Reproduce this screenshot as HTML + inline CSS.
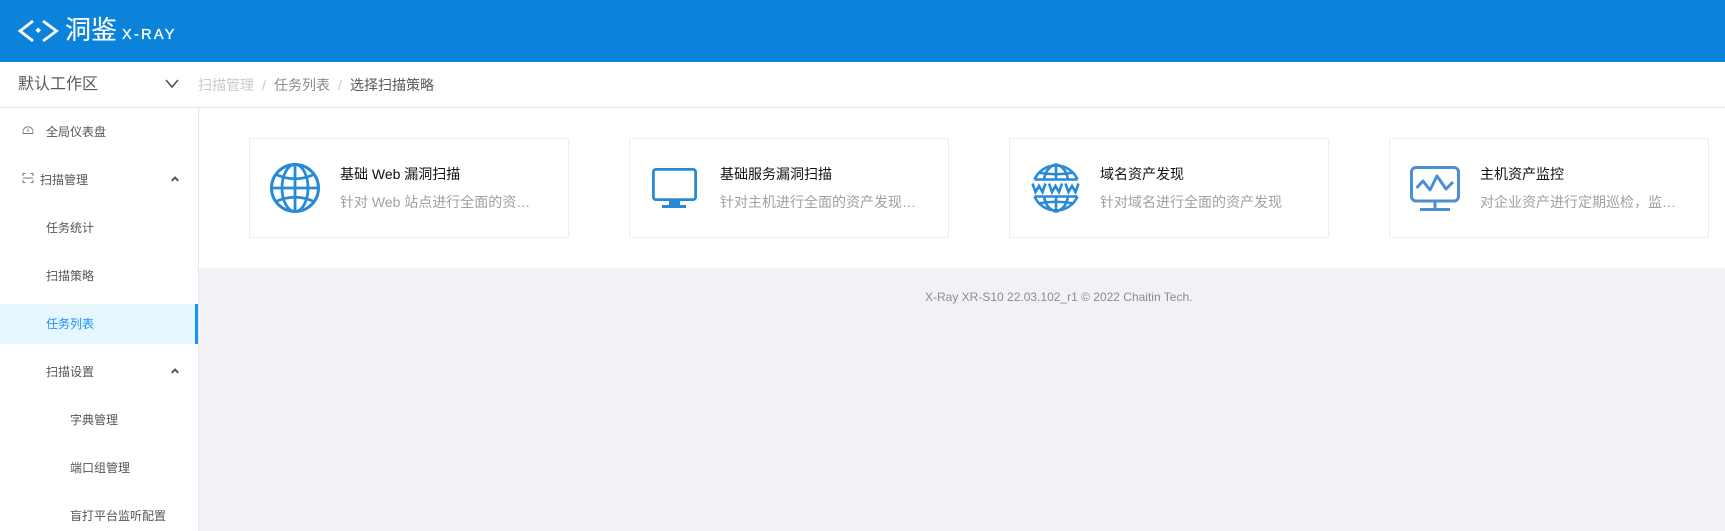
<!DOCTYPE html>
<html lang="zh">
<head>
<meta charset="utf-8">
<title>X-Ray</title>
<style>
html,body{margin:0;padding:0;width:1725px;height:531px;overflow:hidden;background:#f0f2f5;}
body{position:relative;font-family:"Liberation Sans","Noto Sans CJK SC",sans-serif;}
.a{position:absolute;white-space:nowrap;}
#hd{left:0;top:0;width:1725px;height:62px;background:#0c83da;}
#bar{left:0;top:62px;width:1725px;height:45px;background:#fff;border-bottom:1px solid #e6e6e6;}
#side{left:0;top:108px;width:198px;height:423px;background:#fff;border-right:1px solid #e8e8e8;}
#main{left:199px;top:108px;width:1526px;height:160px;background:#fff;border-radius:4px 0 0 0;}
.m{font-size:12px;line-height:20px;color:#555;}
.card{top:138px;width:318px;height:98px;background:#fff;border:1px solid #ededed;border-radius:2px;}
.t{top:164px;font-size:14px;line-height:20px;color:#111;}
.d{top:192px;font-size:14px;line-height:20px;color:#a0a0a0;}
.bc{top:75px;font-size:14px;line-height:20px;}
svg{position:absolute;overflow:visible;}
</style>
</head>
<body>
<div class="a" id="hd"></div>
<svg style="left:0;top:0" width="200" height="62" viewBox="0 0 200 62">
  <path d="M33 21 L20 31 L33 41" fill="none" stroke="#fff" stroke-width="2.8"/>
  <path d="M43 21 L56.5 31 L43 41" fill="none" stroke="#fff" stroke-width="2.8"/>
  <path d="M38.2 27.5 L41 30.3 L38.2 33 L35.4 30.3Z" fill="#fff"/>
</svg>
<div class="a" style="left:65px;top:14px;font-size:26px;line-height:32px;color:#fff;-webkit-text-stroke:.12px #fff;">洞鉴</div>
<div class="a" style="left:122px;top:27px;font-size:14.5px;line-height:17px;color:#fff;letter-spacing:2.3px;-webkit-text-stroke:.3px #fff;">X-RAY</div>

<div class="a" id="bar"></div>
<div class="a" style="left:18px;top:73px;font-size:16px;line-height:24px;color:#595959;">默认工作区</div>
<svg style="left:165px;top:78px" width="14" height="12" viewBox="0 0 14 12"><path d="M1 2 L7 9 L13 2" fill="none" stroke="#555" stroke-width="1.6"/></svg>
<div class="a bc" style="left:198px;color:#c8c8c8;">扫描管理</div>
<div class="a bc" style="left:262px;color:#c8c8c8;">/</div>
<div class="a bc" style="left:274px;color:#8c8c8c;">任务列表</div>
<div class="a bc" style="left:338px;color:#c8c8c8;">/</div>
<div class="a bc" style="left:350px;color:#595959;">选择扫描策略</div>

<div class="a" id="side"></div>
<svg style="left:22px;top:125px" width="12" height="12" viewBox="0 0 12 12"><path d="M1.3 8.5 A5 5 0 1 1 10.7 8.5 Z" fill="none" stroke="#777" stroke-width="0.9"/><path d="M6 3.5 L6 7" stroke="#777" stroke-width="1"/></svg>
<div class="a m" style="left:46px;top:122px;">全局仪表盘</div>
<svg style="left:22px;top:172px" width="12" height="12" viewBox="0 0 12 12"><path d="M1 4V1.5H3.5M8.5 1.5H11V4M11 8V10.5H8.5M3.5 10.5H1V8M1 6H11" fill="none" stroke="#777" stroke-width="1"/></svg>
<div class="a m" style="left:40px;top:170px;">扫描管理</div>
<svg style="left:171px;top:176px" width="8" height="6" viewBox="0 0 8 6"><path d="M.8 4.8 L4 1.5 L7.2 4.8" fill="none" stroke="#555" stroke-width="2"/></svg>
<div class="a m" style="left:46px;top:218px;">任务统计</div>
<div class="a m" style="left:46px;top:266px;">扫描策略</div>
<div class="a" style="left:0;top:304px;width:195px;height:40px;background:#e6f6ff;"></div>
<div class="a" style="left:195px;top:304px;width:3px;height:40px;background:#1890ff;"></div>
<div class="a m" style="left:46px;top:314px;color:#1890ff;">任务列表</div>
<div class="a m" style="left:46px;top:362px;">扫描设置</div>
<svg style="left:171px;top:368px" width="8" height="6" viewBox="0 0 8 6"><path d="M.8 4.8 L4 1.5 L7.2 4.8" fill="none" stroke="#555" stroke-width="2"/></svg>
<div class="a m" style="left:70px;top:410px;">字典管理</div>
<div class="a m" style="left:70px;top:458px;">端口组管理</div>
<div class="a m" style="left:70px;top:506px;">盲打平台监听配置</div>

<div class="a" id="main"></div>

<div class="a card" style="left:249px;"></div>
<svg style="left:270px;top:163px" width="50" height="50" viewBox="0 0 50 50" fill="none" stroke="#268ad9" stroke-width="2.8">
  <circle cx="25" cy="25" r="23.5" stroke-width="3"/>
  <ellipse cx="25" cy="25" rx="13" ry="23.5"/>
  <path d="M25 1.5V48.5M1.5 25H48.5"/>
  <path d="M6 11.5Q25 20 44 11.5M6 38.5Q25 30 44 38.5"/>
</svg>
<div class="a t" style="left:340px;">基础 Web 漏洞扫描</div>
<div class="a d" style="left:340px;">针对 Web 站点进行全面的资…</div>

<div class="a card" style="left:629px;"></div>
<svg style="left:652px;top:168px" width="45" height="41" viewBox="0 0 45 41">
  <rect x="1.4" y="1.4" width="42.2" height="30.2" rx="2.5" fill="none" stroke="#268ad9" stroke-width="2.8"/>
  <path d="M17 33H28V37H34V40H10V37H17Z" fill="#268ad9"/>
</svg>
<div class="a t" style="left:720px;">基础服务漏洞扫描</div>
<div class="a d" style="left:720px;">针对主机进行全面的资产发现…</div>

<div class="a card" style="left:1009px;"></div>
<svg style="left:1031px;top:163px" width="50" height="50" viewBox="0 0 50 50" fill="none" stroke="#268ad9" stroke-width="2.6">
  <path d="M3.5 16.5A23.5 23.5 0 0 1 46.5 16.5M3.5 33.5A23.5 23.5 0 0 0 46.5 33.5"/>
  <path d="M13 16.5Q15 4 25 1.4Q35 4 37 16.5M13 33.5Q15 46 25 48.6Q35 46 37 33.5"/>
  <path d="M25 1.4V16M25 34V48.6M3.5 16.5H46.5M3.5 33.5H46.5"/>
  <path d="M7 9.5Q25 13 43 9.5M7 40.5Q25 37 43 40.5"/>
  <path d="M1.5 20.5L4.5 29L8 23L11.5 29L14.5 20.5M18 20.5L21 29L24.5 23L28 29L31 20.5M34.5 20.5L37.5 29L41 23L44.5 29L47.5 20.5" stroke-width="2.6"/>
</svg>
<div class="a t" style="left:1100px;">域名资产发现</div>
<div class="a d" style="left:1100px;">针对域名进行全面的资产发现</div>

<div class="a card" style="left:1389px;"></div>
<svg style="left:1410px;top:166px" width="50" height="45" viewBox="0 0 50 45" fill="none" stroke="#4a8fd6" stroke-width="3">
  <rect x="1.5" y="1.5" width="47" height="33.5" rx="4.5"/>
  <path d="M6.5 22L13 15L20 24L27 10L36 23L43 16" stroke-linejoin="round"/>
  <path d="M25 36V43M10 43.5H40"/>
</svg>
<div class="a t" style="left:1480px;">主机资产监控</div>
<div class="a d" style="left:1480px;">对企业资产进行定期巡检，监…</div>

<div class="a" style="left:925px;top:288px;font-size:12px;line-height:18px;color:#8c8c8c;">X-Ray XR-S10 22.03.102_r1 © 2022 Chaitin Tech.</div>
</body>
</html>
